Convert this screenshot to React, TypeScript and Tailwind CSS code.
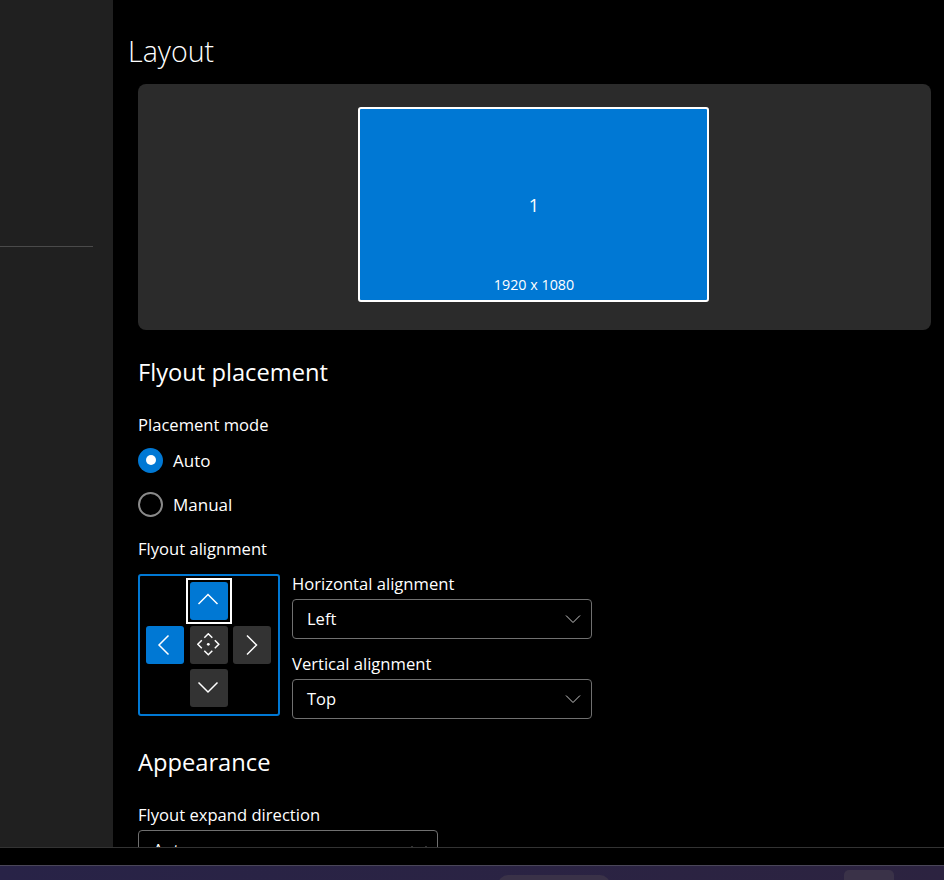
const font = "font-['Open_Sans','Noto_Sans',sans-serif]";

const Chevron = ({ d }: { d: string }) => (
  <svg viewBox="0 0 24 24" className="h-[24px] w-[24px]" fill="none" stroke="currentColor" strokeWidth={1.5}>
    <path d={d} />
  </svg>
);

const Select = ({ value, className = '' }: { value: string; className?: string }) => (
  <div className={`flex h-[40px] w-[300px] shrink-0 items-center justify-between rounded-[4px] border border-[#707070] pl-[14px] pr-[10px] text-[16.5px] text-white ${className}`}>
    <span>{value}</span>
    <svg viewBox="0 0 16 10" className="h-[10px] w-[16px] text-[#c8c8c8]" fill="none" stroke="currentColor" strokeWidth={1}>
      <path d="M1 1.500L8 8.500l7-7" />
    </svg>
  </div>
);

const Radio = ({ label, checked }: { label: string; checked?: boolean }) => (
  <div className="flex h-[24px] items-center gap-[10px]">
    {checked ? (
      <div className="flex h-[25px] w-[25px] items-center justify-center rounded-full bg-[#0078d4]">
        <div className="h-[10px] w-[10px] rounded-full bg-white" />
      </div>
    ) : (
      <div className="h-[25px] w-[25px] rounded-full border-2 border-[#8a8a8a]" />
    )}
    <span className="pt-[2px] text-[17px] text-white">{label}</span>
  </div>
);

const ArrowButton = ({ active, focused, children, className = '' }: { active?: boolean; focused?: boolean; children: React.ReactNode; className?: string }) => (
  <div className={`relative flex h-[38px] w-[38px] items-center justify-center rounded-[3px] text-white ${active ? 'bg-[#0078d4]' : 'bg-[#333333]'} ${className}`}>
    {children}
    {focused && <span className="absolute -inset-[4px] border-2 border-white" />}
  </div>
);

export default function App() {
  return (
    <div className={`flex h-[880px] w-[944px] flex-col overflow-hidden bg-black ${font}`}>
      <div className="flex h-[847px] shrink-0 overflow-hidden">
        <aside className="h-full w-[113px] shrink-0 bg-[#202020] pt-[246px]">
          <div className="h-px w-[93px] bg-[#4a4a4a]" />
        </aside>

        <main className="min-w-0 flex-1 pl-[25px] text-white">
          <h1 className="ml-[-10px] mt-[30px] h-[42px] text-[28.6px] font-light leading-[42px]">Layout</h1>

          <div className="mt-[12px] flex h-[246px] w-[793px] items-start justify-center rounded-[8px] bg-[#2b2b2b] pr-[2px] pt-[23px]">
            <div className="relative flex h-[195px] w-[351px] items-center justify-center rounded-[3px] border-2 border-white bg-[#0078d4] pl-px pt-[2px]">
              <span className="text-[18px]">1</span>
              <span className="absolute bottom-[5px] text-[14.3px]">1920 x 1080</span>
            </div>
          </div>

          <h2 className="mt-[24px] h-[36px] text-[23.7px] leading-[36px]">Flyout placement</h2>

          <div className="mt-[23px] h-[24px] text-[16.6px] leading-[24px]">Placement mode</div>
          <div className="mt-[11px] flex flex-col gap-[20px]">
            <Radio label="Auto" checked />
            <Radio label="Manual" />
          </div>

          <div className="mt-[21px] h-[24px] text-[16.6px] leading-[24px]">Flyout alignment</div>

          <div className="mt-[13px] flex gap-[12px]">
            <div className="grid h-[142px] w-[142px] shrink-0 grid-cols-[38px_38px_38px] grid-rows-[38px_38px_38px] gap-x-[5.5px] gap-y-[5.5px] rounded-[3px] border-2 border-[#0078d4] p-[6px]">
              <ArrowButton active focused className="col-start-2">
                <Chevron d="M1.500 15L11 5.500 20.500 15" />
              </ArrowButton>
              <ArrowButton active className="col-start-1 row-start-2">
                <Chevron d="M15.500 2.500L6 12l9.500 9.500" />
              </ArrowButton>
              <ArrowButton className="col-start-2 row-start-2">
                <svg viewBox="0.700 0.700 24 24" className="h-[24px] w-[24px]" fill="none" stroke="currentColor" strokeWidth={1.5}>
                  <path d="M8 5.500l4-4 4 4M8 18.500l4 4 4-4M5.500 8l-4 4 4 4M18.500 8l4 4-4 4" />
                  <circle cx="12" cy="12" r="1.400" fill="currentColor" stroke="none" />
                </svg>
              </ArrowButton>
              <ArrowButton className="col-start-3 row-start-2">
                <Chevron d="M7 2.500l9.500 9.500L7 21.500" />
              </ArrowButton>
              <ArrowButton className="col-start-2 row-start-3">
                <Chevron d="M1.500 6.500L11 16l9.500-9.500" />
              </ArrowButton>
            </div>

            <div className="mt-[-2px] flex flex-col">
              <div className="h-[24px] text-[16.6px] leading-[24px]">Horizontal alignment</div>
              <Select value="Left" className="mt-[3px]" />
              <div className="mt-[13px] h-[24px] text-[16.6px] leading-[24px]">Vertical alignment</div>
              <Select value="Top" className="mt-[3px]" />
            </div>
          </div>

          <h2 className="mt-[25px] h-[36px] text-[23.7px] leading-[36px]">Appearance</h2>

          <div className="mt-[23px] h-[24px] text-[16.6px] leading-[24px]">Flyout expand direction</div>
          <Select value="Auto" className="mt-[3px]" />
        </main>
      </div>

      <div className="h-[19px] shrink-0 border-t border-b border-t-[#333333] border-b-[#4a4658] bg-black" />

      <div className="relative min-h-0 flex-1 bg-linear-to-r from-[#282347] to-[#2c2340]">
        <div className="absolute left-[498px] top-[9px] h-[20px] w-[112px] rounded-t-[10px] bg-[#3a3248]" />
        <div className="absolute left-[844px] top-[4px] h-[20px] w-[50px] rounded-[5px] bg-[#3a3248]" />
      </div>
    </div>
  );
}
